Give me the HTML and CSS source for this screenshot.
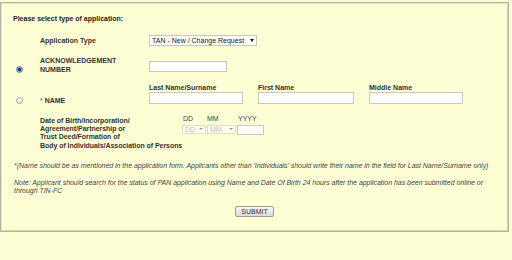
FILE: index.html
```html
<!DOCTYPE html>
<html lang="en">

<head>
    <meta charset="UTF-8">
    <title>Know Your TAN Status</title>
    <link rel="stylesheet" href="styles.css">
</head>

<body>
    <form class="panel" action="#" method="post">

        <div class="heading">Please select type of application:</div>

        <!-- application type -->
        <div class="row row_type">
            <span></span>
            <label class="lbl">Application Type</label>
            <span class="sel sel_type">
                <select name="type">
                    <option>TAN - New / Change Request</option>
                </select>
            </span>
        </div>

        <!-- acknowledgement number -->
        <div class="row row_ack">
            <input type="radio" name="mode" class="radio" checked>
            <label class="lbl">ACKNOWLEDGEMENT<br>NUMBER</label>
            <input type="text" class="txt txt_ack" name="ack">
        </div>

        <!-- name -->
        <div class="row row_name">
            <input type="radio" name="mode" class="radio">
            <label class="lbl lbl_name"><span class="req">*</span> NAME</label>
            <div class="name_fields">
                <div class="field">
                    <label class="lbl">Last Name/Surname</label>
                    <input type="text" class="txt" name="last">
                </div>
                <div class="field">
                    <label class="lbl">First Name</label>
                    <input type="text" class="txt" name="first">
                </div>
                <div class="field">
                    <label class="lbl">Middle Name</label>
                    <input type="text" class="txt" name="middle">
                </div>
            </div>
        </div>

        <!-- date of birth -->
        <div class="row row_dob">
            <span></span>
            <label class="lbl lbl_dob">Date of Birth/Incorporation/<br>Agreement/Partnership or<br>Trust Deed/Formation of<br>Body of Individuals/Association of Persons</label>
            <div class="dob_fields">
                <div class="dob dob_dd">
                    <span class="dob_lbl">DD</span>
                    <span class="sel sel_off">
                        <select name="dd" disabled><option>DD</option></select>
                    </span>
                </div>
                <div class="dob dob_mm">
                    <span class="dob_lbl">MM</span>
                    <span class="sel sel_off">
                        <select name="mm" disabled><option>MM</option></select>
                    </span>
                </div>
                <div class="dob dob_yy">
                    <span class="dob_lbl">YYYY</span>
                    <input type="text" class="txt txt_yy" name="yyyy">
                </div>
            </div>
        </div>

        <p class="note note_first"><span class="req">*</span>(Name should be as mentioned in the application form. Applicants other than 'Individuals' should write their name in the field for Last Name/Surname only)</p>

        <p class="note">Note: Applicant should search for the status of PAN application using Name and Date Of Birth 24 hours after the application has been submitted online or through TIN-FC</p>

        <div class="actions">
            <button type="submit" class="btn">SUBMIT</button>
        </div>

    </form>
</body>

</html>
```

FILE: styles.css
```css
* {
    margin: 0;
    padding: 0;
    box-sizing: border-box;
}

body {
    background: #ffffd6;
    font-family: "Liberation Sans", Arial, sans-serif;
    font-size: 7px;
    color: #333;
}

.panel {
    display: block;
    width: 509px;
    margin-top: 2px;
    border: 1px solid #b4b4a2;
    box-shadow: inset 1px 1px 0 #e4e4cc, inset -1px -1px 0 #d2d2bc;
    padding: 11px 12px 14px 12px;
}

.heading {
    font-weight: bold;
    color: #222;
    line-height: 9px;
}

.row {
    display: grid;
    grid-template-columns: 27px 109px auto;
    align-items: start;
    justify-items: start;
}

.lbl {
    font-weight: bold;
    color: #333;
    line-height: 9px;
}

.req {
    color: #ee2222;
    font-weight: normal;
}

/* application type */
.row_type {
    margin-top: 12px;
    align-items: center;
}

.sel {
    position: relative;
    display: inline-block;
}

.sel select {
    appearance: none;
    -webkit-appearance: none;
    display: block;
    font: inherit;
    font-size: 7px;
    line-height: 9px;
    height: 11px;
    border: 1px solid #c6c6c6;
    background: #fff;
    color: #222;
    padding: 0 0 0 2px;
    outline: 0;
}

.sel::after {
    content: '';
    position: absolute;
    right: 3px;
    top: 4px;
    border-left: 2.5px solid transparent;
    border-right: 2.5px solid transparent;
    border-top: 3px solid #111;
}

.sel_type select {
    width: 108px;
}

/* radios */
.radio {
    appearance: none;
    -webkit-appearance: none;
    width: 7px;
    height: 7px;
    margin-left: 3px;
    border-radius: 50%;
    border: 1px solid #a8a8a8;
    background: radial-gradient(circle at 50% 40%, #ffffff, #d8d8d8);
}

.radio:checked {
    border-color: #6a86ac;
    background: radial-gradient(circle, #203a66 0, #203a66 1px, #6f96c8 2px, #c9daf0 100%);
}

/* text boxes */
.txt {
    display: block;
    height: 12px;
    border: 1px solid #c8c8c8;
    background: #fff;
    outline: 0;
    font: inherit;
}

/* acknowledgement */
.row_ack {
    margin-top: 10px;
}

.row_ack .radio {
    margin-top: 10px;
}

.txt_ack {
    width: 78px;
    height: 11px;
    margin-top: 5px;
}

/* name */
.row_name {
    margin-top: 10px;
}

.row_name .radio {
    margin-top: 13px;
}

.lbl_name {
    margin-top: 12px;
}

.name_fields {
    display: grid;
    grid-template-columns: 94px 96px 94px;
    column-gap: 15px;
}

.field .lbl {
    display: block;
    line-height: 8px;
}

.field .txt {
    width: 100%;
}

/* date of birth */
.row_dob {
    margin-top: 10px;
    grid-template-columns: 27px 142px auto;
}

.lbl_dob {
    margin-top: 2px;
    line-height: 8.2px;
    white-space: nowrap;
    letter-spacing: -0.05px;
}

.dob_fields {
    display: flex;
    align-items: flex-end;
    gap: 1px;
}

.dob {
    display: flex;
    flex-direction: column;
}

.dob_lbl {
    color: #444;
    line-height: 8px;
    margin-bottom: 2px;
    padding-left: 1px;
}

.dob_mm .dob_lbl {
    padding-left: 0;
}

.sel_off select {
    height: 9px;
    line-height: 7px;
    color: #a0a0a0;
    border-color: #cfcfcf;
    background: #fff;
}

.sel_off::after {
    top: 3px;
    border-left-width: 2px;
    border-right-width: 2px;
    border-top: 2px solid #9a9a9a;
}

.dob_dd select {
    width: 24px;
}

.dob_mm select {
    width: 29px;
}

.txt_yy {
    width: 27px;
    height: 10px;
    margin-bottom: -1px;
}

/* notes */
.note {
    font-style: italic;
    color: #444;
    line-height: 8px;
    margin-top: 9px;
    padding-left: 1px;
    letter-spacing: -0.03px;
}

.note_first {
    margin-top: 12px;
}

.actions {
    text-align: center;
    margin-top: 11px;
}

.btn {
    width: 39px;
    height: 11px;
    font: inherit;
    font-size: 7px;
    line-height: 9px;
    color: #333;
    border: 1px solid #9c9c9c;
    border-radius: 2px;
    background: linear-gradient(#f8f8f8, #dadada);
    cursor: pointer;
}
```
